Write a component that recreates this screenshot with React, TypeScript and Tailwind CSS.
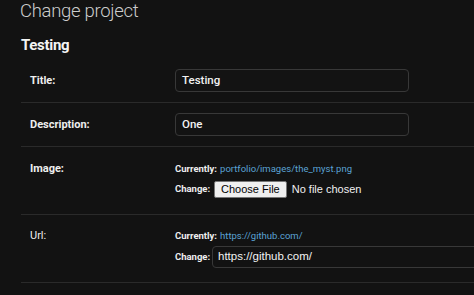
import React from "react"

const font = { fontFamily: "Roboto, 'Liberation Sans', sans-serif" }
const arial = { fontFamily: "'Liberation Sans', Arial, sans-serif" }

interface RowProps {
  label: string
  bold?: boolean
  children: React.ReactNode
  className?: string
  center?: boolean
}

const Row: React.FC<RowProps> = ({ label, bold = true, children, className, center }) => (
  <div className={`flex border-b border-[#2a2a2a] ${center ? "items-center" : "items-start"} ${className ?? ""}`}>
    <div
      className={`w-[154px] shrink-0 pl-[9px] text-[11px] leading-[16px] text-[#eeeeee] ${bold ? "font-bold" : "font-normal"}`}
    >
      {label}
    </div>
    <div className="flex-1 min-w-0">{children}</div>
  </div>
)

const TextBox: React.FC<{ value: string }> = ({ value }) => (
  <div className="w-[234px] h-[23px] flex items-center px-[6px] rounded-[4px] border border-[#383838] bg-[#131313] text-[11.5px] font-medium text-[#f2f2f2]">
    {value}
  </div>
)

export default function App() {
  return (
    <div className="w-[474px] h-[295px] overflow-hidden bg-[#121212]" style={font}>
      {/* Header */}
      <h1 className="pl-[20px] text-[18.5px] leading-[22px] font-light text-[#cdcdcd] tracking-[-0.3px]">
        Change project
      </h1>
      <h2 className="pl-[21px] mt-[13px] text-[15px] leading-[20px] font-bold text-[#f4f4f4] tracking-[-0.3px]">
        Testing
      </h2>

      <div className="ml-[21px] mt-[4px]">
        <Row label="Title:" center className="py-[10px]">
          <TextBox value="Testing" />
        </Row>
        <Row label="Description:" center className="py-[10px]">
          <TextBox value="One" />
        </Row>

        {/* Image */}
        <Row label="Image:" className="pt-[14px] pb-[16px]">
          <div className="h-[16px] flex items-center text-[9.5px]">
            <span className="font-bold text-[#eeeeee]">Currently:</span>
            <a className="ml-[3px] text-[#5ba3d4]">portfolio/images/the_myst.png</a>
          </div>
          <div className="mt-[4px] flex items-center">
            <span className="text-[9.5px] font-bold text-[#eeeeee] w-[39px]">Change:</span>
            <div
              className="h-[17px] px-[6px] flex items-center bg-[#efefef] border border-[#767676] rounded-[2px] text-[11px] text-black"
              style={arial}
            >
              Choose File
            </div>
            <span className="ml-[5px] text-[11px] text-[#f0f0f0]" style={arial}>
              No file chosen
            </span>
          </div>
        </Row>

        {/* Url */}
        <Row label="Url:" bold={false} className="pt-[13px] pb-[14px]">
          <div className="h-[16px] flex items-center text-[9.5px]">
            <span className="font-bold text-[#eeeeee]">Currently:</span>
            <a className="ml-[3px] text-[#5ba3d4]">https://github.com/</a>
          </div>
          <div className="mt-[2px] flex items-center">
            <span className="text-[9.5px] font-bold text-[#eeeeee] w-[37px] shrink-0">Change:</span>
            <div
              className="h-[22px] w-[300px] shrink-0 flex items-center px-[5px] rounded-[4px] border border-[#383838] text-[11.5px] text-[#f2f2f2]"
              style={arial}
            >
              https://github.com/
            </div>
          </div>
        </Row>
      </div>
    </div>
  )
}
